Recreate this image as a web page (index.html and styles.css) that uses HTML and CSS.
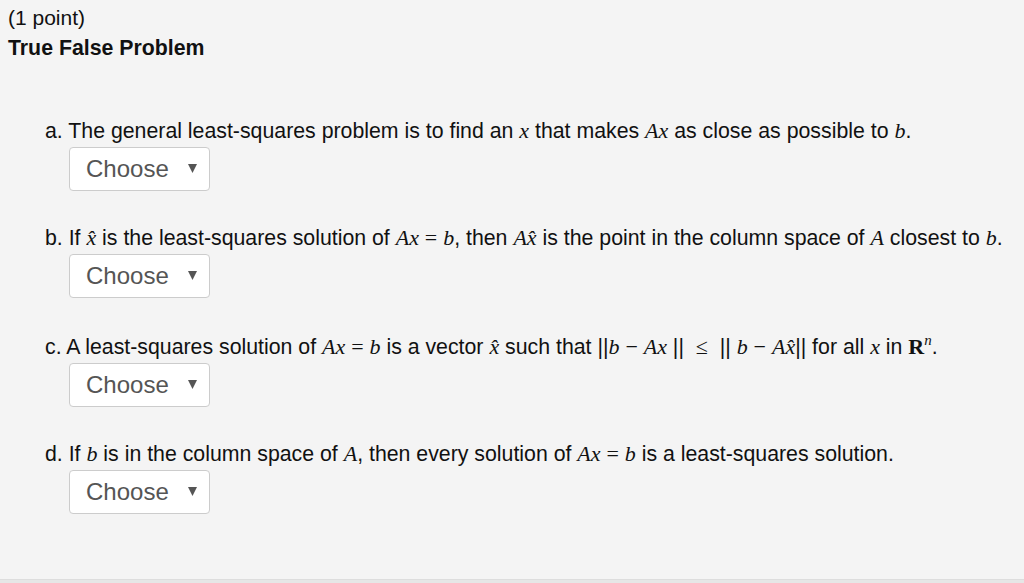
FILE: index.html
```html
<!DOCTYPE html>
<html>
<head>
<meta charset="utf-8">
<link rel="stylesheet" href="styles.css">
</head>
<body>
<div class="page">
  <div class="points">(1 point)</div>
  <div class="title">True False Problem</div>
  <div class="items">
    <div class="item">
      <div class="q">a. The general least-squares problem is to find an <i class="m">x</i> that makes <i class="m">Ax</i> as close as possible to <i class="m">b</i>.</div>
      <div class="sel"><span class="opt">Choose</span><svg class="arr" width="9" height="9" viewBox="0 0 9 9"><path d="M0 0 H9 L4.5 9 Z" fill="#555"/></svg></div>
    </div>
    <div class="item">
      <div class="q">b. If <i class="m">x̂</i> is the least-squares solution of <i class="m">Ax</i> <span class="mo">=</span> <i class="m">b</i>, then <i class="m">Ax̂</i> is the point in the column space of <i class="m">A</i> closest to <i class="m">b</i>.</div>
      <div class="sel"><span class="opt">Choose</span><svg class="arr" width="9" height="9" viewBox="0 0 9 9"><path d="M0 0 H9 L4.5 9 Z" fill="#555"/></svg></div>
    </div>
    <div class="item item-tall">
      <div class="q">c. A least-squares solution of <i class="m">Ax</i> <span class="mo">=</span> <i class="m">b</i> is a vector <i class="m">x̂</i> such that ||<i class="m">b</i> <span class="mo">−</span> <i class="m">Ax</i> || &nbsp;<span class="mo">≤</span>&nbsp; || <i class="m">b</i> <span class="mo">−</span> <i class="m">Ax̂</i>|| for all <i class="m">x</i> in <b class="mb">R</b><sup class="m">n</sup>.</div>
      <div class="sel"><span class="opt">Choose</span><svg class="arr" width="9" height="9" viewBox="0 0 9 9"><path d="M0 0 H9 L4.5 9 Z" fill="#555"/></svg></div>
    </div>
    <div class="item">
      <div class="q">d. If <i class="m">b</i> is in the column space of <i class="m">A</i>, then every solution of <i class="m">Ax</i> <span class="mo">=</span> <i class="m">b</i> is a least-squares solution.</div>
      <div class="sel"><span class="opt">Choose</span><svg class="arr" width="9" height="9" viewBox="0 0 9 9"><path d="M0 0 H9 L4.5 9 Z" fill="#555"/></svg></div>
    </div>
  </div>
</div>
<div class="bottom"></div>
</body>
</html>
```
FILE: styles.css
```css
html, body {
  margin: 0;
  padding: 0;
  background: #f4f4f4;
}
body {
  font-family: "Liberation Sans", Arial, sans-serif;
  color: #111;
  height: 583px;
  position: relative;
  overflow: hidden;
}
.page {
  padding: 6px 0 0 8px;
}
.points {
  font-size: 21px;
  line-height: 24px;
}
.title {
  font-size: 21.3px;
  font-weight: bold;
  line-height: 24px;
  margin-top: 6px;
}
.items {
  padding-left: 37px;
  margin-top: 59px;
  display: flex;
  flex-direction: column;
  gap: 35px;
}
.item-tall {
  margin-top: 2px;
}
.q {
  font-size: 21.3px;
  line-height: 24px;
  white-space: nowrap;
}
.m {
  font-family: "Liberation Serif", "Times New Roman", serif;
  font-style: italic;
  font-size: 22px;
}
.mo {
  font-family: "Liberation Serif", "Times New Roman", serif;
  font-size: 22px;
}
.mb {
  font-family: "Liberation Serif", "Times New Roman", serif;
  font-size: 22px;
}
sup.m {
  font-size: 15px;
  vertical-align: 9px;
  line-height: 0;
}
.sel {
  margin: 4px 0 0 24px;
  width: 139px;
  height: 42px;
  background: #fff;
  border: 1px solid #ccc;
  border-radius: 4px;
  display: flex;
  align-items: center;
  box-sizing: content-box;
  color: #555;
}
.opt {
  font-size: 24px;
  margin-left: 16px;
  flex: 1;
}
.arr {
  margin-right: 12px;
  margin-top: -2px;
}
.bottom {
  position: absolute;
  left: 0;
  right: 0;
  bottom: 0;
  height: 3px;
  background: #e6e6e6;
  border-top: 1px solid #ddd;
}
```
